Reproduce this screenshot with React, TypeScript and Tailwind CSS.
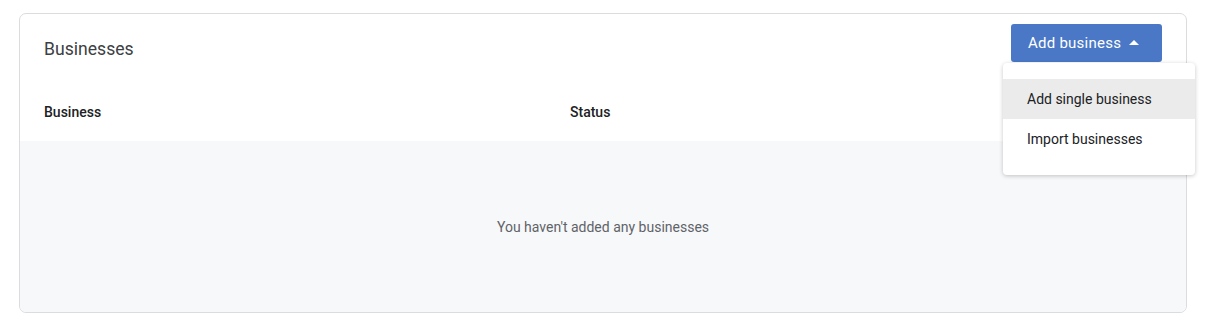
import React from 'react';

const App = () => {
   return (
      <div className="w-[1207px] h-[329px] bg-white pt-[13px] pl-[19px] font-['Roboto',sans-serif]">
         <div className="relative w-[1168px] h-[300px] border border-[#dadce0] rounded-[7px] bg-white flex flex-col overflow-visible">
            <div className="flex items-start justify-between h-[62px] pl-[24px] pr-[24px]">
               <h2 className="mt-[24px] text-[17.6px] leading-[22px] text-[#3c4043]">Businesses</h2>
               <button className="mt-[10px] h-[38px] w-[151px] rounded-[3px] bg-[#4a78c6] text-white text-[15px] tracking-[0.25px] flex items-center justify-start gap-[8px] pl-[17px]">
                  Add business
                  <svg width="10" height="5" viewBox="0 0 10 5" className="mb-[1px]">
                     <path d="M0 5 L5 0 L10 5 Z" fill="white" />
                  </svg>
               </button>
            </div>
            <div className="grid grid-cols-[526px_1fr] h-[65px] pl-[24px] pt-[26px] text-[14px] font-medium text-[#202124]">
               <span>Business</span>
               <span>Status</span>
            </div>
            <div className="flex-1 rounded-b-[7px] bg-[#f7f8fa] flex items-center justify-center pt-[1px]">
               <span className="text-[14px] text-[#5f6368]">You haven't added any businesses</span>
            </div>
            <div className="absolute left-[983px] top-[49px] w-[192px] py-[16px] bg-white rounded-[4px] shadow-[0_1px_4px_rgba(0,0,0,0.22)] text-[14px] text-[#202124]">
               <div className="h-[40px] pl-[24px] flex items-center bg-[#ebebeb]">Add single business</div>
               <div className="h-[40px] pl-[24px] flex items-center">Import businesses</div>
            </div>
         </div>
      </div>
   );
};

export default App;
